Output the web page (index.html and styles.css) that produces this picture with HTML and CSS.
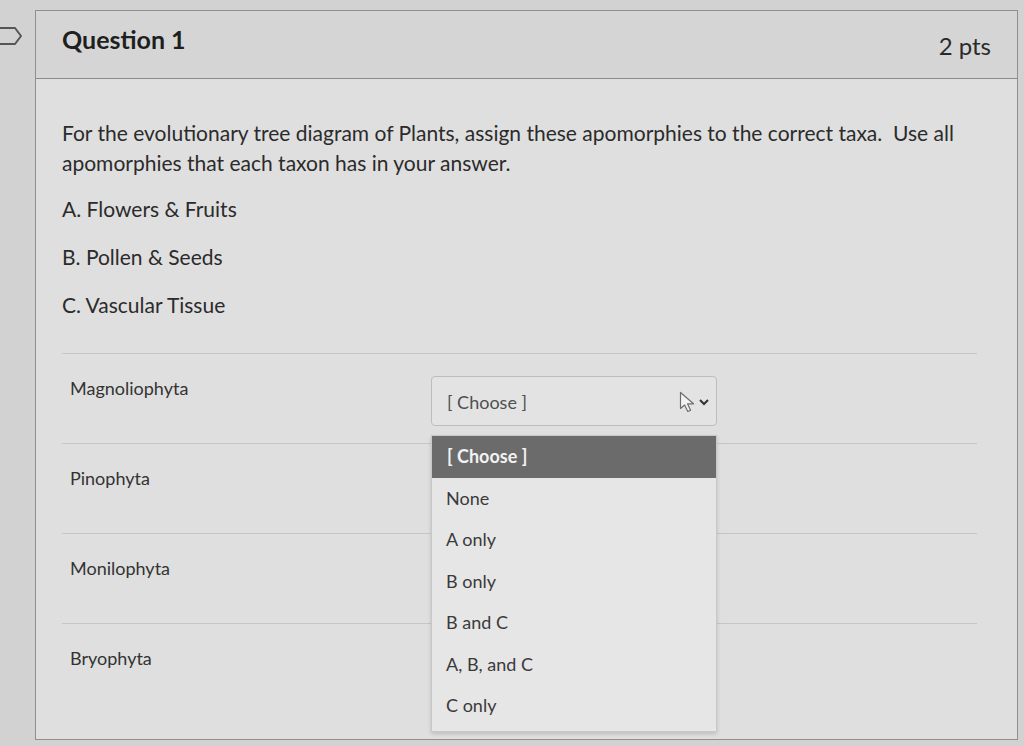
FILE: index.html
```html
<!DOCTYPE html>
<html>
<head>
<meta charset="utf-8">
<link rel="stylesheet" href="styles.css">
</head>
<body>
<div class="page">
  <div class="marker">
    <svg width="24" height="20" viewBox="0 0 24 20"><path d="M-2 2 H15 L21 10 L15 18 H-2" fill="none" stroke="#555" stroke-width="2" stroke-linejoin="round"/></svg>
  </div>
  <div class="card">
    <div class="card-header">
      <h2 class="q-title">Question 1</h2>
      <span class="q-pts">2 pts</span>
    </div>
    <div class="card-body">
      <p class="prompt">For the evolutionary tree diagram of Plants, assign these apomorphies to the correct taxa.&nbsp; Use all apomorphies that each taxon has in your answer.</p>
      <p class="item">A. Flowers &amp; Fruits</p>
      <p class="item">B. Pollen &amp; Seeds</p>
      <p class="item">C. Vascular Tissue</p>
      <div class="answers">
        <div class="row">
          <div class="label">Magnoliophyta</div>
          <div class="select-wrap">
            <div class="select">
              <span class="sel-text">[ Choose ]</span>
              <span class="sel-icons">
                <svg width="18" height="22" viewBox="0 0 18 22"><path d="M1.5 1.5 L1.5 17.5 L5.6 14 L8.8 20.5 L11.6 19.2 L8.5 12.8 L14.5 12.8 Z" fill="#f2f2f2" stroke="#6e6e6e" stroke-width="1.2" stroke-linejoin="round"/></svg>
                <svg width="12" height="10" viewBox="0 0 12 10"><path d="M2 3 L6 7 L10 3" fill="none" stroke="#333" stroke-width="2"/></svg>
              </span>
            </div>
            <ul class="menu">
              <li class="opt active">[ Choose ]</li>
              <li class="opt">None</li>
              <li class="opt">A only</li>
              <li class="opt">B only</li>
              <li class="opt">B and C</li>
              <li class="opt">A, B, and C</li>
              <li class="opt">C only</li>
            </ul>
          </div>
        </div>
        <div class="row"><div class="label">Pinophyta</div></div>
        <div class="row"><div class="label">Monilophyta</div></div>
        <div class="row last"><div class="label">Bryophyta</div></div>
      </div>
    </div>
  </div>
</div>
</body>
</html>
```

FILE: styles.css
```css
html, body {
  margin: 0;
  padding: 0;
  background: #d2d2d2;
  font-family: Lato, "Open Sans", sans-serif;
  color: #2e2e2e;
}
.page {
  position: relative;
  padding: 10px 6px 6px 35px;
  height: 746px;
  box-sizing: border-box;
  overflow: hidden;
}
.marker {
  position: absolute;
  left: 0;
  top: 26px;
}
.card {
  border: 1px solid #8f8f8f;
  background: #dfdfdf;
  height: 730px;
  box-sizing: border-box;
}
.card-header {
  display: flex;
  justify-content: space-between;
  align-items: flex-start;
  height: 68px;
  box-sizing: border-box;
  padding: 11px 26px 0 26px;
  background: #d5d5d5;
  border-bottom: 1px solid #8a8a8a;
}
.q-title {
  margin: 0;
  font-size: 25px;
  font-weight: 700;
  color: #1f1f1f;
  line-height: 34px;
}
.q-pts {
  font-size: 24px;
  color: #2a2a2a;
  line-height: 32px;
  margin-top: 8px;
}
.card-body {
  padding: 39px 40px 0 26px;
}
.prompt {
  margin: 0 0 16px 0;
  font-size: 21px;
  line-height: 30px;
  color: #2b2b2b;
}
.item {
  margin: 0 0 18px 0;
  font-size: 21px;
  line-height: 30px;
  color: #2b2b2b;
}
.answers {
  margin-top: 33px;
  border-top: 1px solid #c6c6c6;
}
.row {
  display: flex;
  height: 90px;
  box-sizing: border-box;
  border-bottom: 1px solid #c6c6c6;
  padding: 22px 0 0 8px;
}
.row.last {
  border-bottom: none;
}
.label {
  width: 361px;
  font-size: 18px;
  line-height: 24px;
  color: #333;
}
.select-wrap {
  position: relative;
}
.select {
  width: 286px;
  height: 50px;
  box-sizing: border-box;
  border: 1px solid #bdbdbd;
  border-radius: 4px;
  background: #e3e3e3;
  display: flex;
  align-items: center;
  justify-content: space-between;
  padding: 2px 6px 0 15px;
  font-size: 18px;
  color: #505050;
}
.sel-icons {
  display: flex;
  align-items: center;
  gap: 1px;
}
.menu {
  position: absolute;
  left: 0;
  top: 59px;
  width: 284px;
  margin: 0;
  padding: 0 0 4px 0;
  list-style: none;
  background: #e6e6e6;
  border: 1px solid #c8c8c8;
  box-shadow: 0 2px 4px rgba(0,0,0,0.15);
  z-index: 5;
}
.opt {
  height: 41.5px;
  line-height: 41.5px;
  padding-left: 14px;
  font-size: 18px;
  color: #3a3a3a;
}
.opt.active {
  background: #6b6b6b;
  color: #f2f2f2;
  font-weight: 700;
  padding-left: 15px;
}
```
